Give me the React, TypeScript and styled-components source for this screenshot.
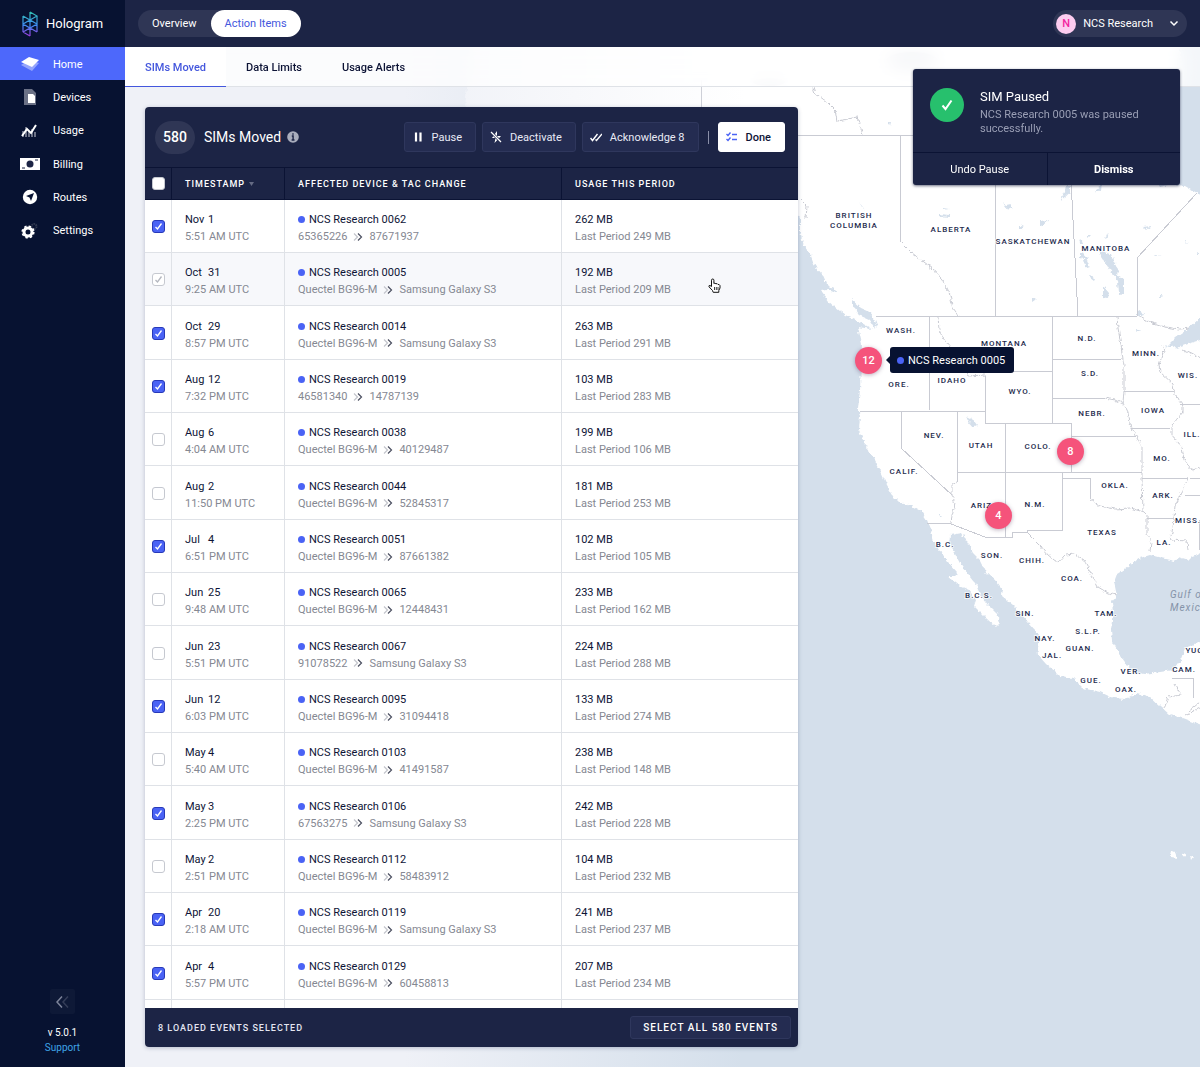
import React, { useState } from 'react';
import styled, { createGlobalStyle, css } from 'styled-components';

const colors = {
  night: '#071231',
  navy: '#1c2445',
  navyLine: '#0b1334',
  navyButton: '#242c51',
  navyBorder: '#2f375d',
  pill: '#2f3655',
  blue: '#4a63f5',
  tabBlue: '#4457dd',
  ink: '#0d1436',
  grey: '#858892',
  line: '#dfe2e7',
  ocean: '#d4dfeb',
  mapLine: '#c9cbd3',
  pin: '#f5537b',
  green: '#27c06d',
};

const GlobalStyle = createGlobalStyle`
  * {
    box-sizing: border-box;
  }
  body {
    margin: 0;
    font-family: Roboto, 'Liberation Sans', sans-serif;
    font-size: 11px;
    color: ${colors.ink};
  }
  button {
    font: inherit;
    color: inherit;
    border: 0;
    padding: 0;
    background: none;
    cursor: pointer;
  }
`;

const SShell = styled.div`
  display: grid;
  grid-template-columns: 125px minmax(0, 1fr);
  grid-template-rows: minmax(0, 1fr);
  height: 100vh;
  overflow: hidden;
`;

const SSidebar = styled.aside`
  display: flex;
  flex-direction: column;
  background: ${colors.night};
  color: #fff;
`;

const SLogo = styled.a`
  display: flex;
  align-items: center;
  gap: 8px;
  height: 47px;
  padding-left: 22px;
  font-size: 13px;
  color: #fff;
  text-decoration: none;
`;

const SNav = styled.nav`
  display: flex;
  flex-direction: column;
  height: 200px;
`;

const SNavLink = styled.a<{ active?: boolean }>`
  flex: 1;
  display: flex;
  align-items: center;
  gap: 13px;
  padding: 1px 0 0 20px;
  color: #fff;
  text-decoration: none;
  background: ${({ active }) => (active ? '#4d68fb' : 'transparent')};
`;

const SSidebarFooter = styled.div`
  display: flex;
  flex-direction: column;
  align-items: center;
  margin-top: auto;
  padding-bottom: 12px;
  font-size: 10px;
  line-height: 15px;
`;

const SCollapse = styled.button`
  display: grid;
  place-items: center;
  width: 25px;
  height: 25px;
  margin-bottom: 11px;
  background: #0e1937;
  border-radius: 2px;
`;

const SSupport = styled.a`
  color: #3fa5e8;
  text-decoration: none;
`;

const SContent = styled.div`
  position: relative;
  display: flex;
  flex-direction: column;
  min-width: 0;
  isolation: isolate;
`;

const STopBar = styled.header`
  display: flex;
  align-items: center;
  justify-content: space-between;
  height: 47px;
  padding: 0 13px;
  background: ${colors.navy};
  color: #fff;
`;

const SSwitch = styled.div`
  display: flex;
  height: 27px;
  border-radius: 14px;
  background: ${colors.pill};
`;

const SSwitchButton = styled.button<{ active?: boolean }>`
  padding: 0 14px;
  border-radius: 14px;
  ${({ active }) =>
    active &&
    css`
      background: #fff;
      color: ${colors.tabBlue};
    `}
`;

const SAccount = styled.button`
  display: flex;
  align-items: center;
  height: 27px;
  padding: 0 8px 0 3px;
  border-radius: 14px;
  background: ${colors.pill};
`;

const SAvatar = styled.span`
  display: grid;
  place-items: center;
  width: 20px;
  height: 20px;
  margin-right: 7px;
  border-radius: 50%;
  background: #fdcdf0;
  color: #f2279f;
  font-weight: 500;
`;

const SChevron = styled.svg`
  margin-left: 16px;
`;

const STabs = styled.nav`
  display: flex;
  height: 40px;
  background: rgba(255, 255, 255, 0.75);
  backdrop-filter: blur(8px);
  border-bottom: 1px solid ${colors.line};
`;

const STab = styled.a<{ active?: boolean }>`
  display: flex;
  align-items: center;
  height: 40px;
  padding: 2px 20px 0;
  font-weight: 500;
  text-decoration: none;
  color: ${({ active }) => (active ? colors.tabBlue : colors.ink)};
  background: ${({ active }) => (active ? '#fff' : 'transparent')};
  border-bottom: 1px solid ${({ active }) => (active ? colors.tabBlue : 'transparent')};
`;

const SWorkspace = styled.main`
  flex: 1;
  display: grid;
  grid-template-columns: minmax(0, 653px);
  grid-template-rows: minmax(0, 1fr);
  min-height: 0;
  padding: 20px;
`;

const SPanel = styled.section`
  position: relative;
  display: flex;
  flex-direction: column;
  min-height: 0;
  border-radius: 4px;
  overflow: hidden;
  background: #fff;
  box-shadow: 0 1px 4px rgba(20, 30, 80, 0.25);
`;

const SPanelHeader = styled.div`
  display: flex;
  flex: none;
  align-items: center;
  height: 60px;
  padding: 0 13px 0 10px;
  background: ${colors.navy};
  color: #fff;
`;

const SCount = styled.span`
  display: grid;
  place-items: center;
  width: 40px;
  height: 33px;
  border-radius: 17px;
  background: ${colors.pill};
  font-size: 14px;
  font-weight: 500;
`;

const STitle = styled.h1`
  margin: 0 6px 0 9px;
  font-size: 14px;
  font-weight: 400;
`;

const SActions = styled.div`
  display: flex;
  align-items: center;
  gap: 6px;
  margin-left: auto;
`;

const SAction = styled.button<{ primary?: boolean }>`
  display: flex;
  align-items: center;
  gap: 8px;
  height: 30px;
  padding: 0 13px 0 7px;
  border: 1px solid ${({ primary }) => (primary ? '#fff' : colors.navyBorder)};
  border-radius: 3px;
  background: ${({ primary }) => (primary ? '#fff' : colors.navyButton)};
  color: ${({ primary }) => (primary ? colors.ink : '#e8eaf5')};
  font-weight: ${({ primary }) => (primary ? 500 : 400)};
`;

const SDivider = styled.span`
  width: 1px;
  height: 13px;
  margin: 0 3px;
  background: #8a8fa8;
`;

const STableWrap = styled.div`
  flex: 1;
  min-height: 0;
  overflow: hidden;
`;

const STable = styled.table`
  width: 100%;
  table-layout: fixed;
  border-collapse: separate;
  border-spacing: 0;
  text-align: left;

  col:nth-child(1) {
    width: 27px;
  }
  col:nth-child(2) {
    width: 113px;
  }
  col:nth-child(3) {
    width: 277px;
  }
`;

const SHeadCell = styled.th`
  height: 33px;
  padding: 0 13px;
  border: 1px solid ${colors.navyLine};
  border-left: 0;
  background: ${colors.navy};
  color: #fff;
  font-size: 9px;
  font-weight: 500;
  letter-spacing: 1px;
  text-transform: uppercase;

  &:first-child {
    padding: 0 7px;
  }
  &:last-child {
    border-right: 0;
  }
`;

const SSortArrow = styled.svg`
  margin-left: 4px;
`;

const SCell = styled.td`
  height: 53px;
  padding: 4px 13px 0;
  border-right: 1px solid ${colors.line};
  border-bottom: 1px solid ${colors.line};
  line-height: 17px;
  white-space: nowrap;

  &:first-child {
    padding: 1px 7px 0;
  }
  &:last-child {
    border-right: 0;
  }
`;

const SRow = styled.tr<{ hovered?: boolean }>`
  background: ${({ hovered }) => (hovered ? '#f7f8fb' : '#fff')};

  &:nth-child(3n) ${SCell} {
    height: 54px;
  }
`;

const SPrimary = styled.div`
  display: flex;
  align-items: center;
`;

const SSecondary = styled.div`
  display: flex;
  align-items: center;
  gap: 6px;
  color: ${colors.grey};
`;

const SMonth = styled.span`
  min-width: 23px;
`;

const SDot = styled.span`
  width: 7px;
  height: 7px;
  margin-right: 4px;
  border-radius: 50%;
  background: ${colors.blue};
`;

const SCheck = styled.label`
  display: grid;
  width: 13px;
  height: 13px;

  & > * {
    grid-area: 1 / 1;
  }
  svg {
    pointer-events: none;
  }
`;

const SCheckInput = styled.input`
  appearance: none;
  width: 13px;
  height: 13px;
  margin: 0;
  border: 1px solid #c6c9d0;
  border-radius: 3px;
  background: #fff;

  &:checked:not(:disabled) {
    border-color: #2739b8;
    background: ${colors.blue};
  }
`;

const SPanelFooter = styled.div`
  display: flex;
  flex: none;
  align-items: center;
  justify-content: space-between;
  height: 39px;
  padding: 0 7px 0 13px;
  background: ${colors.navy};
  color: #e4e6f2;
  font-size: 9px;
  font-weight: 500;
  letter-spacing: 1px;
  text-transform: uppercase;
`;

const SSelectAll = styled.button`
  height: 23px;
  padding: 0 12px;
  border: 1px solid ${colors.navyBorder};
  border-radius: 3px;
  background: ${colors.navyButton};
  color: #fff;
  font-size: 10px;
  font-weight: 500;
  letter-spacing: 1px;
  text-transform: uppercase;
`;

const SCursor = styled.svg`
  position: absolute;
  left: 563px;
  top: 171px;
  pointer-events: none;
`;

const SMap = styled.div`
  position: absolute;
  inset: 47px 0 0;
  z-index: -1;
  background: ${colors.ocean};
  overflow: hidden;

  &::after {
    content: '';
    position: absolute;
    inset: 0 auto 0 0;
    width: 620px;
    background: linear-gradient(to right, #eff1f7 45%, rgba(239, 241, 247, 0));
    pointer-events: none;
  }
`;

const SMapSvg = styled.svg`
  display: block;
  width: 100%;
  height: 100%;
`;

const SLabels = styled.g`
  font-size: 8px;
  font-weight: 500;
  letter-spacing: 1px;
  text-anchor: middle;
  fill: #1d2a4d;
  stroke: #fff;
  stroke-width: 2px;
  stroke-opacity: 0.7;
  paint-order: stroke;
`;

const SGulfLabel = styled.text`
  font-size: 10px;
  font-style: italic;
  letter-spacing: 1px;
  fill: #8593a8;
`;

const SPin = styled.button`
  position: absolute;
  display: grid;
  place-items: center;
  width: 27px;
  height: 27px;
  border-radius: 50%;
  background: ${colors.pin};
  color: #fff;
  font-weight: 500;
  box-shadow: 0 1px 4px rgba(60, 30, 70, 0.35);
`;

const STooltip = styled.div`
  position: absolute;
  left: 765px;
  top: 300px;
  display: flex;
  align-items: center;
  height: 26px;
  padding: 0 9px 0 7px;
  border-radius: 3px;
  background: ${colors.night};
  color: #fff;

  &::before {
    content: '';
    position: absolute;
    left: -4px;
    top: 9px;
    border: 4px solid transparent;
    border-left: 0;
    border-right-color: ${colors.night};
  }
`;

const SToast = styled.div`
  position: absolute;
  top: 69px;
  right: 20px;
  width: 267px;
  border-radius: 3px;
  background: ${colors.navy};
  color: #fff;
  box-shadow: 0 1px 3px rgba(10, 16, 50, 0.6);
`;

const SToastBody = styled.div`
  display: flex;
  gap: 16px;
  height: 83px;
  padding: 19px 17px 0;

  svg {
    flex: none;
  }
  h2 {
    margin: 0 0 2px;
    font-size: 13px;
    font-weight: 400;
    line-height: 18px;
  }
  p {
    margin: 0;
    line-height: 14px;
    color: #9a9fb5;
  }
`;

const SToastActions = styled.div`
  display: grid;
  grid-template-columns: 1fr 1fr;
  border-top: 1px solid ${colors.navyLine};
`;

const SToastButton = styled.button<{ strong?: boolean }>`
  height: 32px;
  font-weight: ${({ strong }) => (strong ? 700 : 400)};

  & + & {
    border-left: 1px solid ${colors.navyLine};
  }
`;

interface IEvent {
  month: string;
  day: number;
  time: string;
  device: string;
  from: string;
  to: string;
  usage: number;
  last: number;
  selected?: boolean;
  paused?: boolean;
}

const Q = 'Quectel BG96-M';
const S3 = 'Samsung Galaxy S3';

const EVENTS: IEvent[] = [
  { month: 'Nov', day: 1, time: '5:51 AM', device: '0062', from: '65365226', to: '87671937', usage: 262, last: 249, selected: true },
  { month: 'Oct', day: 31, time: '9:25 AM', device: '0005', from: Q, to: S3, usage: 192, last: 209, paused: true },
  { month: 'Oct', day: 29, time: '8:57 PM', device: '0014', from: Q, to: S3, usage: 263, last: 291, selected: true },
  { month: 'Aug', day: 12, time: '7:32 PM', device: '0019', from: '46581340', to: '14787139', usage: 103, last: 283, selected: true },
  { month: 'Aug', day: 6, time: '4:04 AM', device: '0038', from: Q, to: '40129487', usage: 199, last: 106 },
  { month: 'Aug', day: 2, time: '11:50 PM', device: '0044', from: Q, to: '52845317', usage: 181, last: 253 },
  { month: 'Jul', day: 4, time: '6:51 PM', device: '0051', from: Q, to: '87661382', usage: 102, last: 105, selected: true },
  { month: 'Jun', day: 25, time: '9:48 AM', device: '0065', from: Q, to: '12448431', usage: 233, last: 162 },
  { month: 'Jun', day: 23, time: '5:51 PM', device: '0067', from: '91078522', to: S3, usage: 224, last: 288 },
  { month: 'Jun', day: 12, time: '6:03 PM', device: '0095', from: Q, to: '31094418', usage: 133, last: 274, selected: true },
  { month: 'May', day: 4, time: '5:40 AM', device: '0103', from: Q, to: '41491587', usage: 238, last: 148 },
  { month: 'May', day: 3, time: '2:25 PM', device: '0106', from: '67563275', to: S3, usage: 242, last: 228, selected: true },
  { month: 'May', day: 2, time: '2:51 PM', device: '0112', from: Q, to: '58483912', usage: 104, last: 232 },
  { month: 'Apr', day: 20, time: '2:18 AM', device: '0119', from: Q, to: S3, usage: 241, last: 237, selected: true },
  { month: 'Apr', day: 4, time: '5:57 PM', device: '0129', from: Q, to: '60458813', usage: 207, last: 234, selected: true },
];

const LABELS: [string, number, number][] = [
  ['BRITISH', 854, 218], ['COLUMBIA', 854, 228], ['ALBERTA', 951, 232], ['SASKATCHEWAN', 1033, 244],
  ['MANITOBA', 1106, 251], ['WASH.', 901, 333], ['MONTANA', 1004, 346], ['N.D.', 1087, 341],
  ['S.D.', 1090, 376], ['MINN.', 1146, 356], ['WIS.', 1188, 378], ['ORE.', 899, 387], ['IDAHO', 952, 383],
  ['WYO.', 1020, 394], ['NEBR.', 1092, 416], ['IOWA', 1153, 413], ['ILL.', 1192, 437], ['NEV.', 934, 438],
  ['UTAH', 981, 448], ['COLO.', 1038, 449], ['MO.', 1162, 461], ['CALIF.', 904, 474], ['OKLA.', 1115, 488],
  ['ARK.', 1163, 498], ['ARIZ.', 983, 508], ['N.M.', 1035, 507], ['MISS.', 1188, 523], ['TEXAS', 1102, 535],
  ['LA.', 1164, 545], ['B.C.', 945, 547], ['SON.', 992, 558], ['CHIH.', 1032, 563], ['COA.', 1072, 581],
  ['B.C.S.', 979, 598], ['SIN.', 1025, 616], ['TAM.', 1106, 616], ['S.L.P.', 1088, 634], ['NAY.', 1045, 641],
  ['GUAN.', 1080, 651], ['JAL.', 1052, 658], ['VER.', 1131, 674], ['GUE.', 1091, 683], ['OAX.', 1126, 692],
  ['YUC.', 1196, 653], ['CAM.', 1184, 672],
];

const LAND =
  'M472 40 465 107 600 190 790 205 800 218 800 232 804 246 811 255 815 266 822 274 826 283 831 288 837 290 836 293 826 289 820 290 828 301 835 307 846 316 860 322 872 329 858 327 862 344 861 360 860 390 858 408 860 416 859 430 863 440 867 448 875 460 879 468 887 485 894 497 900 503 912 506 922 512 927 520 931 530 934 542 939 549 948 562 957 572 955 577 948 577 960 586 969 590 976 600 974 606 986 618 996 627 1000 623 997 614 988 605 980 594 975 583 968 575 962 567 955 554 950 545 951 535 962 533 966 540 973 553 980 560 986 572 997 582 1003 590 1002 596 1013 605 1020 612 1028 622 1035 630 1041 638 1037 645 1038 655 1046 664 1056 672 1060 676 1073 678 1083 688 1100 692 1113 698 1125 699 1137 693 1150 697 1160 706 1170 715 1183 718 1210 728V640L1200 642 1185 648 1181 660 1174 670 1160 672 1145 674 1133 672 1127 665 1120 655 1112 640 1111 630 1113 612 1112 602 1117 596 1114 582 1117 574 1125 569 1140 558 1150 555 1162 558 1175 561 1178 557 1188 560 1192 556 1210 550V196L1197 193 1185 186 1172 184 1160 187 1145 165 1180 80V40Z';

const LAKES =
  'M966 416l4 2 2-2 2 5 3 4-4 2-5-6zM1099 250l8 3 4 1 3 8 5 7-1 7 6 3 0 14-5 1-1-13-6-8-4-6-6-9zM1103 286l6 7-1 5-5-1zM1080 253l5 2 5 12-3 1-3-9-4-2zM1090 275l5 4-1 2-4-3zM1040 221l8-1-3 5-3-1-2 3zM1019 225l4 2-2 3-2-1zM1003 202l4 4 5-1 0 3-4 2-3-4zM1066 185l4 0 0 8-9 7 4-8zM938 214l12 1 0 2-12-1zM943 208l6 1-6 1zM856 197l3 5 6 8-3-3zM1095 190l8-5 0 2-7 6zM1143 227l8-1-5 4zM1155 255l7 0-8 1zM1137 309l4 2 3 4-7 2zM1136 330l5-1-4 4zM1160 296l4 1-4 0zM1185 242l4 2-4-1zM1088 235l3 0-3 3zM1107 234l2 3-4 2zM888 122l3 0-1 4zM938 513l5 4-3-1zM1032 299l4 0-3 2zM1196 252l3 2-3 0zM1079 240l3-1 1 4-3 0z' +
  'M1165 348l10-10 13-9 12-11 5 0 0 21-17 5-11 4-6-3zM852 300l9 8 7 3 6 7 3 8-3 2-5-8-9-4-5-8-3-2z';

// Rivers and ranges, drawn with a wobble
const ROUGH_BORDERS =
  'M813 87l2 6 12 9 8 8 2 11 11-2 9-2 6 18M901 242l11 11 20 15 11 12 6 12 4 16 6 8M938 316l1 14 4 8 7 9 18 29 17-1M1137 316l13 6 15 5 15 2 10-1M1117 316l1 12 3 17 2 15 1 5v26l-1 11 5 10 3 16 6 9 5 10v31l1 34 4 2v19l4 9-1 10M1105 398l10 2 8 4M1162 345l2 5-5 15 1 7 13 12 1 9 9 12v7l-11 13v10l10 12 2 13 8 10 8-2M957 482l-5 2v11l3 9-3 11-1 9M1090 499l10 7 15 3 15-1 17 5M1188 478l-5 12-8 15-1 15-2 12-2 8 17 1 1 9M1027 532l13 13 8 10 10 8 7-8 10-1 9 6 8 15 6 12 10 6 9 2M801 200l6 6-1 13M1183 350l17 8M1175 684l6 11-13 2-4 11M1200 708l-15 8M1188 712l12-10';

const STRAIGHT_BORDERS =
  'M701 80v40M790 135h360M900 135v107M995 135v181M1071 135l1 65 6 116M1197 193l-60 65v58M876 316h261M929 316v94M860 411h125M985 376v47M985 371h67M1052 316v107M985 423h86v49M1052 359h69M1052 398h53M1124 391h50M1131 428h39M1071 436h65M957 472h185M901 411v37l51 47M957 411v71M1005 423v114M1062 472v58h-35v2h-15v5h-27l-34-13-24-1M1062 478h28v21M1142 478h46M1147 518h27M1180 404h20M1190 478h10M1185 495h15M1199 520v30M1172 678h21v20';

const MapArt = () => (
  <SMapSvg viewBox="125 47 1075 1020" preserveAspectRatio="xMinYMin slice" role="img" aria-label="Device map">
    <filter id="coast" x="0" y="0" width="100%" height="100%">
      <feTurbulence type="fractalNoise" baseFrequency="0.25" numOctaves="2" seed="4" />
      <feDisplacementMap in="SourceGraphic" scale="5" xChannelSelector="R" yChannelSelector="G" />
    </filter>
    <g filter="url(#coast)">
      <path d={LAND} fill="#fff" />
      <path d={LAKES} fill={colors.ocean} />
      <path d="M1171 850l4 2 2 6-7-1zM1181 852l5 3-2 3zM1190 856l3 1-2 3z" fill="#fff" />
    </g>
    <g fill="none" stroke={colors.mapLine}>
      <path d={ROUGH_BORDERS} filter="url(#coast)" />
      <path d={STRAIGHT_BORDERS} shapeRendering="crispEdges" />
    </g>
    <ellipse cx="912" cy="61" rx="26" ry="9" fill="#dadde6" />
    <ellipse cx="769" cy="82" rx="16" ry="4" fill="#e6e8ee" />
    <SLabels>
      {LABELS.map(([name, x, y]) => (
        <text key={name} x={x} y={y}>
          {name}
        </text>
      ))}
    </SLabels>
    <SGulfLabel x="1170" y="598">Gulf of</SGulfLabel>
    <SGulfLabel x="1170" y="611">Mexico</SGulfLabel>
  </SMapSvg>
);

const PINS = [
  { count: 12, left: 730, top: 300 },
  { count: 8, left: 932, top: 391 },
  { count: 4, left: 860, top: 455 },
];

const LogoMark = () => (
  <svg width="16" height="26" viewBox="0 0 16 26" fill="none" stroke="url(#mark)" strokeWidth="1.2">
    <linearGradient id="mark" gradientUnits="userSpaceOnUse" x1="0" y1="0" x2="0" y2="26">
      <stop offset="0" stopColor="#2fc6b0" />
      <stop offset="0.55" stopColor="#3f8df5" />
      <stop offset="1" stopColor="#a534dc" />
    </linearGradient>
    <path d="M1 5v16M8 1v24M15 5v16M8 1l7 4-7 4-7-4M1 13l7-4 7 4M1 13l7 4 7-4M1 21l7-4 7 4M1 21l7 4" />
  </svg>
);

const NAV_ICONS: { [name: string]: React.ReactNode } = {
  Home: (
    <>
      <path d="M1 10l8-5 10 3-7 8z" fill="#fff" opacity="0.4" />
      <path d="M1 7l8-5 10 3-7 7z" fill="#fff" />
    </>
  ),
  Devices: (
    <>
      <path d="M4 1h8l4 4v12H4z" fill="#6b7186" />
      <path d="M8 6h5l2 2v7H8z" fill="#fff" />
    </>
  ),
  Usage: (
    <>
      <path d="M3 9v6M6 5v10M9 9v6M12 7v8M15 10v5" stroke="#6b7186" strokeWidth="2" />
      <path d="M2 14l5-7 4 4 5-8" fill="none" stroke="#fff" strokeWidth="2" />
    </>
  ),
  Billing: (
    <>
      <rect x="0" y="3" width="20" height="12" fill="#fff" />
      <circle cx="10" cy="9" r="3.5" fill="#1c2445" />
      <path d="M2 13h3M15 5h3" stroke="#1c2445" />
    </>
  ),
  Routes: (
    <>
      <circle cx="10" cy="9" r="7.2" fill="#fff" />
      <path d="M14 5l-3 8-1.5-3.5L6 8z" fill="#071231" />
    </>
  ),
  Settings: (
    <>
      <circle cx="14" cy="4.5" r="2.5" fill="none" stroke="#30384f" strokeWidth="2" strokeDasharray="1.5 .7" />
      <circle cx="8" cy="10" r="4" fill="none" stroke="#fff" strokeWidth="3" />
      <circle cx="8" cy="10" r="5.8" fill="none" stroke="#fff" strokeWidth="1.6" strokeDasharray="2.4 2.15" />
    </>
  ),
};

const ACTION_ICONS: { [name: string]: React.ReactNode } = {
  Pause: <path d="M4 1.500v9M8.500 1.500v9" stroke="#fff" strokeWidth="2.2" />,
  Deactivate: (
    <>
      <path d="M7 0L2 7H5.500L4.500 12L11 5H7z" fill="#fff" />
      <path d="M1 1l10 10" stroke="#242c51" strokeWidth="2.6" />
      <path d="M1 1l10 10" stroke="#fff" strokeWidth="1.2" />
    </>
  ),
  Acknowledge: (
    <path d="M.5 7l2 2.500 5-6.500M5.500 8.500l1 1 5.500-6.500" fill="none" stroke="#fff" strokeWidth="1.4" />
  ),
  Done: (
    <path
      d="M.5 3l1.500 1.500L4.500 1.500M.5 8l1.500 1.500L4.500 6.500M6 3.500h5M6 8.500h5"
      fill="none"
      stroke={colors.blue}
      strokeWidth="1.4"
    />
  ),
};

const ActionIcon = ({ name }: { name: string }) => (
  <svg width="12" height="12" viewBox="0 0 12 12">{ACTION_ICONS[name]}</svg>
);

interface ICheckboxProps {
  label: string;
  checked: boolean;
  disabled?: boolean;
  onChange: () => void;
}

const Checkbox = ({ label, checked, disabled, onChange }: ICheckboxProps) => (
  <SCheck>
    <SCheckInput type="checkbox" aria-label={label} checked={checked} disabled={disabled} onChange={onChange} />
    {checked && (
      <svg width="13" height="13" viewBox="0 0 13 13">
        <path d="M3.500 7l2 2 4-5.500" fill="none" stroke={disabled ? '#b4b7bf' : '#fff'} strokeWidth="1.3" />
      </svg>
    )}
  </SCheck>
);

const App = () => {
  const [selected, setSelected] = useState(EVENTS.filter(e => e.selected).map(e => e.device));
  const [toast, setToast] = useState(true);

  const toggle = (device: string) =>
    setSelected(selected.includes(device) ? selected.filter(d => d !== device) : [...selected, device]);

  const selectable = EVENTS.filter(e => !e.paused).map(e => e.device);
  const allSelected = selected.length === selectable.length;
  const toggleAll = () => setSelected(allSelected ? [] : selectable);

  return (
    <>
      <GlobalStyle />
      <SShell>
        <SSidebar>
          <SLogo href="#">
            <LogoMark />
            Hologram
          </SLogo>
          <SNav>
            {Object.keys(NAV_ICONS).map(name => (
              <SNavLink key={name} href={`#${name}`} active={name === 'Home'}>
                <svg width="20" height="18" viewBox="0 0 20 18">{NAV_ICONS[name]}</svg>
                {name}
              </SNavLink>
            ))}
          </SNav>
          <SSidebarFooter>
            <SCollapse aria-label="Collapse sidebar">
              <svg width="13" height="12" viewBox="0 0 13 12" fill="none" strokeWidth="1.5">
                <path d="M6 .5L1 6l5 5.500" stroke="#7d849a" />
                <path d="M12 .5L7 6l5 5.500" stroke="#343d58" />
              </svg>
            </SCollapse>
            <span>v 5.0.1</span>
            <SSupport href="#support">Support</SSupport>
          </SSidebarFooter>
        </SSidebar>

        <SContent>
          <SMap>
            <MapArt />
            {PINS.map(({ count, left, top }) => (
              <SPin key={count} style={{ left, top }}>{count}</SPin>
            ))}
            <STooltip>
              <SDot />
              NCS Research 0005
            </STooltip>
          </SMap>

          <STopBar>
            <SSwitch>
              <SSwitchButton>Overview</SSwitchButton>
              <SSwitchButton active>Action Items</SSwitchButton>
            </SSwitch>
            <SAccount>
              <SAvatar>N</SAvatar>
              NCS Research
              <SChevron width="10" height="7" viewBox="0 0 10 7">
                <path d="M1.500 1.500L5 5l3.500-3.500" fill="none" stroke="#fff" strokeWidth="1.5" />
              </SChevron>
            </SAccount>
          </STopBar>

          <STabs>
            <STab href="#moved" active>SIMs Moved</STab>
            <STab href="#limits">Data Limits</STab>
            <STab href="#alerts">Usage Alerts</STab>
          </STabs>

          <SWorkspace>
            <SPanel>
              <SPanelHeader>
                <SCount>580</SCount>
                <STitle>SIMs Moved</STitle>
                <svg width="12" height="12" viewBox="0 0 12 12">
                  <circle cx="6" cy="6" r="5.800" fill="#a9adbc" />
                  <path d="M6 2.200v1.600M4.800 5h1.300v4M4.600 9h2.900" fill="none" stroke="#1c2445" strokeWidth="1.4" />
                </svg>
                <SActions>
                  <SAction><ActionIcon name="Pause" />Pause</SAction>
                  <SAction><ActionIcon name="Deactivate" />Deactivate</SAction>
                  <SAction><ActionIcon name="Acknowledge" />{`Acknowledge ${selected.length}`}</SAction>
                  <SDivider />
                  <SAction primary><ActionIcon name="Done" />Done</SAction>
                </SActions>
              </SPanelHeader>

              <STableWrap>
                <STable>
                  <colgroup>
                    <col />
                    <col />
                    <col />
                    <col />
                  </colgroup>
                  <thead>
                    <tr>
                      <SHeadCell>
                        <Checkbox label="Select all" checked={allSelected} onChange={toggleAll} />
                      </SHeadCell>
                      <SHeadCell>
                        Timestamp
                        <SSortArrow width="5" height="6" viewBox="0 0 5 6">
                          <path d="M0 1h5L2.500 5z" fill="#656b84" />
                        </SSortArrow>
                      </SHeadCell>
                      <SHeadCell>Affected Device &amp; TAC Change</SHeadCell>
                      <SHeadCell>Usage This Period</SHeadCell>
                    </tr>
                  </thead>
                  <tbody>
                    {EVENTS.map(e => (
                      <SRow key={e.device} hovered={e.paused}>
                        <SCell>
                          <Checkbox
                            label={`Select NCS Research ${e.device}`}
                            checked={!!e.paused || selected.includes(e.device)}
                            disabled={e.paused}
                            onChange={() => toggle(e.device)}
                          />
                        </SCell>
                        <SCell>
                          <SPrimary>
                            <SMonth>{e.month}</SMonth>
                            {e.day}
                          </SPrimary>
                          <SSecondary>{`${e.time} UTC`}</SSecondary>
                        </SCell>
                        <SCell>
                          <SPrimary>
                            <SDot />
                            {`NCS Research ${e.device}`}
                          </SPrimary>
                          <SSecondary>
                            {e.from}
                            <svg width="10" height="8" viewBox="0 0 10 8" fill="none" strokeWidth="1.2">
                              <path d="M1 .5L4.500 4 1 7.500" stroke="#c3c5cc" />
                              <path d="M5 .5L8.500 4 5 7.500" stroke="#4b4f60" />
                            </svg>
                            {e.to}
                          </SSecondary>
                        </SCell>
                        <SCell>
                          <SPrimary>{`${e.usage} MB`}</SPrimary>
                          <SSecondary>{`Last Period ${e.last} MB`}</SSecondary>
                        </SCell>
                      </SRow>
                    ))}
                    <SRow>
                      <SCell />
                      <SCell />
                      <SCell />
                      <SCell />
                    </SRow>
                  </tbody>
                </STable>
              </STableWrap>

              <SPanelFooter>
                <span>{`${selected.length} Loaded Events Selected`}</span>
                <SSelectAll onClick={toggleAll}>Select all 580 events</SSelectAll>
              </SPanelFooter>

              <SCursor width="13" height="15" viewBox="0 0 13 15">
                <path
                  d="M3.500 8.500V2.200a1.200 1.200 0 0 1 2.400 0V5.500l1-.4 1 .7 1.200-.2.900.9 1.200.1.800 1V10l-1.200 2.500V14.300H5.200L4.500 12.500 1 8.800q-.4-1.600 1-1.300z"
                  fill="#fff"
                  stroke="#111"
                />
                <path d="M6.500 9v3M8.300 9v3M10 9v3" stroke="#111" strokeWidth="0.8" />
              </SCursor>
            </SPanel>
          </SWorkspace>

          {toast && (
            <SToast role="status">
              <SToastBody>
                <svg width="34" height="34" viewBox="0 0 34 34">
                  <circle cx="17" cy="17" r="17" fill={colors.green} />
                  <path d="M12.500 17.500l3 3.500 6-8.500" fill="none" stroke="#fff" strokeWidth="2" />
                </svg>
                <div>
                  <h2>SIM Paused</h2>
                  <p>NCS Research 0005 was paused successfully.</p>
                </div>
              </SToastBody>
              <SToastActions>
                <SToastButton onClick={() => setToast(false)}>Undo Pause</SToastButton>
                <SToastButton strong onClick={() => setToast(false)}>Dismiss</SToastButton>
              </SToastActions>
            </SToast>
          )}
        </SContent>
      </SShell>
    </>
  );
};

export default App;
